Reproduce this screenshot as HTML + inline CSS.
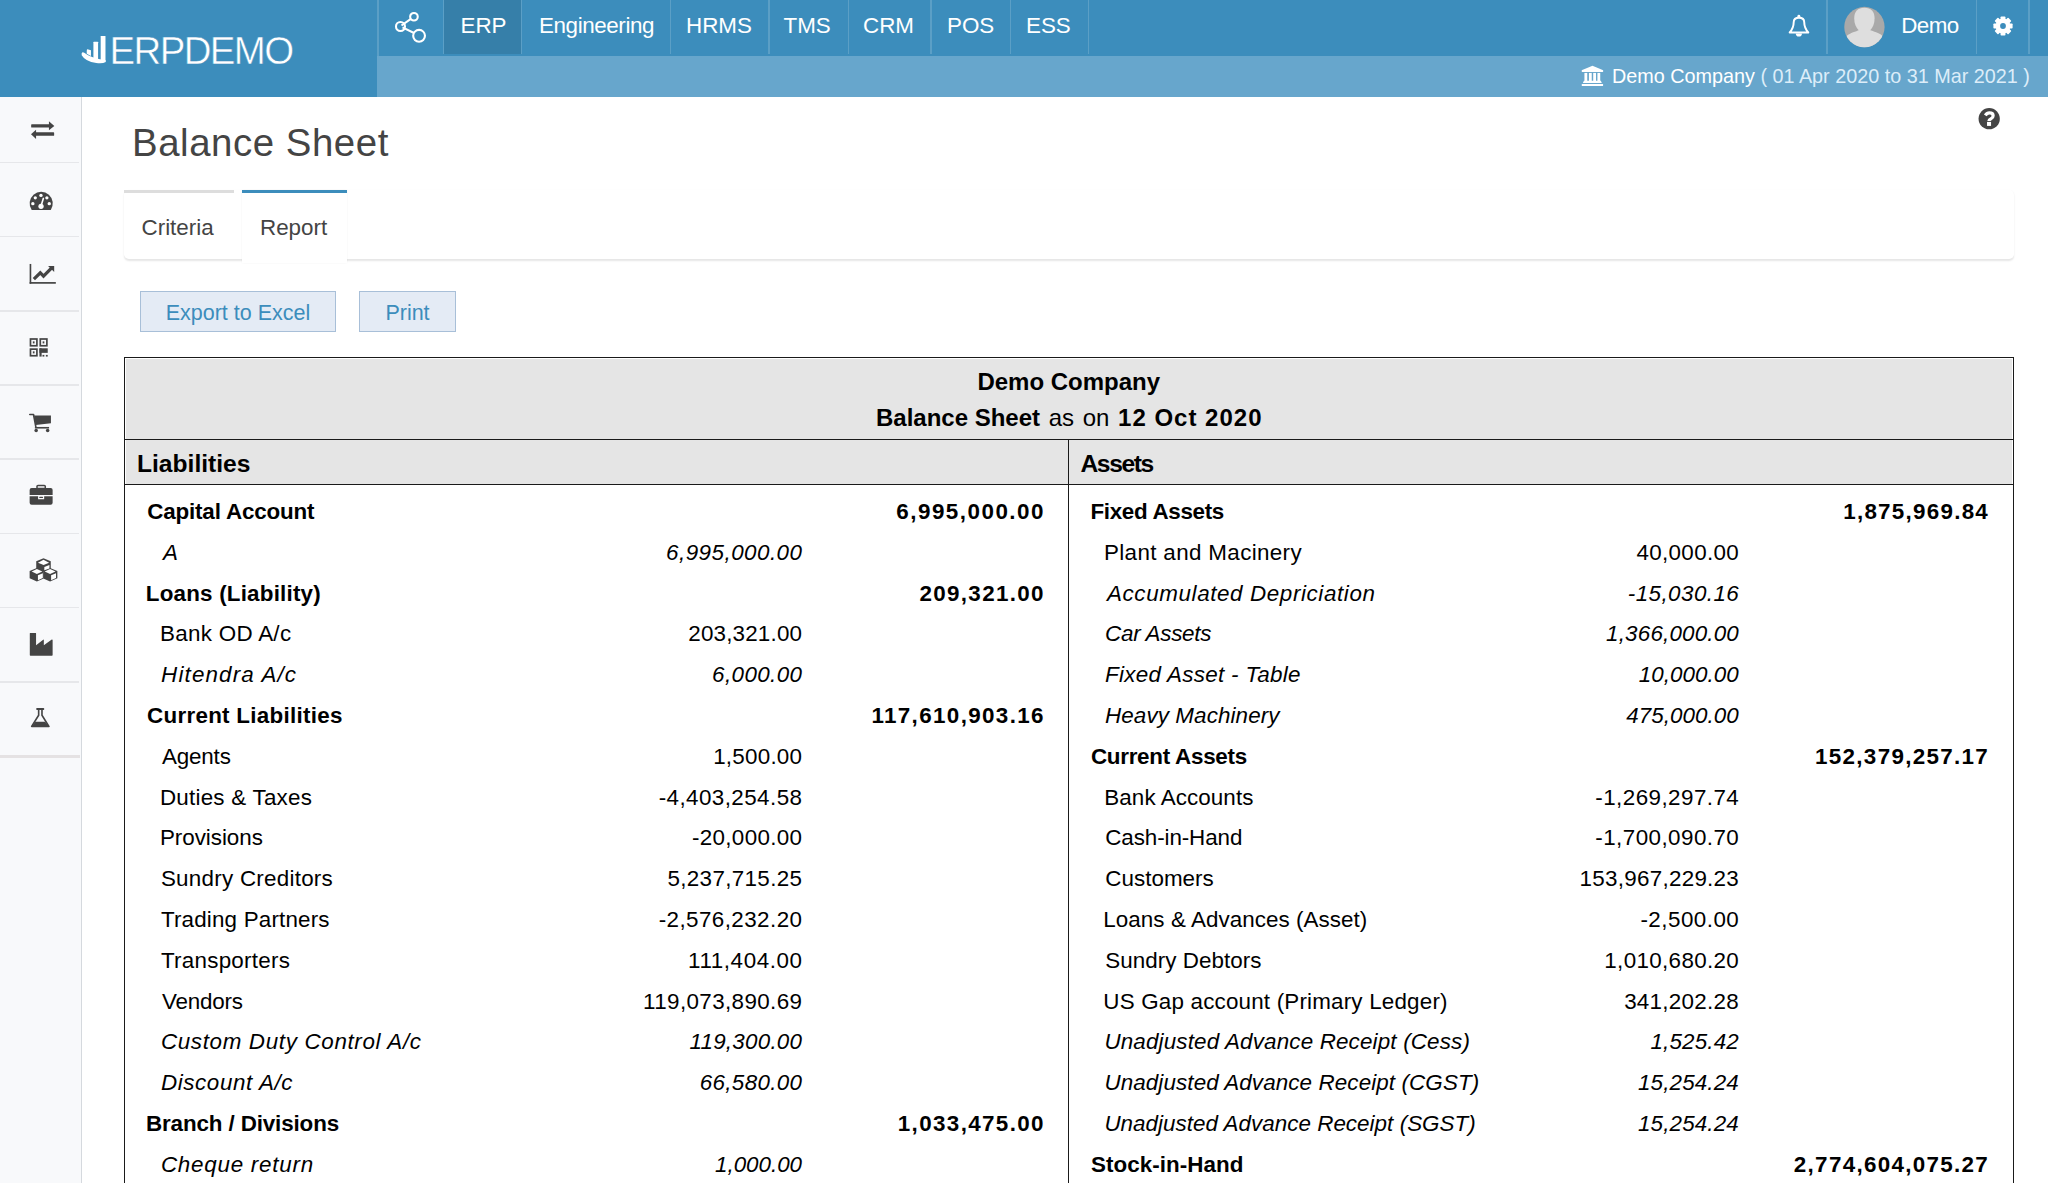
<!DOCTYPE html>
<html>
<head>
<meta charset="utf-8">
<style>
*{box-sizing:border-box;margin:0;padding:0}
html,body{width:2048px;height:1183px;overflow:hidden;background:#fff;font-family:"Liberation Sans",sans-serif;position:relative}
.abs{position:absolute}
#logo{left:0;top:0;width:377px;height:97px;background:#3c8dbc}
#topnav{left:377px;top:0;width:1671px;height:56px;background:#3c8dbc}
#subbar{left:377px;top:55.5px;width:1671px;height:41.5px;background:#67a6cc}
.sep{position:absolute;top:0;width:1.6px;height:54px;background:rgba(255,255,255,0.16)}
.nt{position:absolute;top:0;height:54px;line-height:52px;font-size:22.4px;color:#fff;white-space:nowrap}
#sidebar{left:0;top:97px;width:82.4px;height:1086px;background:#f8f9fb;border-right:1.6px solid #d5d9de}
.sbsep{position:absolute;left:0;width:79px;height:1.6px;background:#e6e7ea}
.ico{position:absolute}
.btn{background:#e4ebf5;border:1.6px solid #a8bfd8;color:#3c8dbc;font-size:21.5px;line-height:42px;text-align:center;white-space:nowrap}
.hl{height:1.6px;background:#1a1a1a}
.tt{font-size:24px;line-height:35.6px;color:#000;white-space:nowrap}
.th{font-size:24.6px;line-height:36px;color:#000;white-space:nowrap}
.r{position:absolute;font-size:22.4px;line-height:40.8px;height:40.8px;color:#000;white-space:nowrap}
.it{font-style:italic}
.b{font-weight:bold}
.nm.b{letter-spacing:-0.25px}
.nm.it{letter-spacing:0.55px}
.num{letter-spacing:0.1px;margin-right:-0.1px}
.num.it{letter-spacing:0.35px;margin-right:-0.35px}
.num.b{letter-spacing:1.3px;margin-right:-1.3px}
</style>
</head>
<body>
<!-- logo -->
<div id="logo" class="abs">
  <svg class="ico" style="left:76px;top:30px" width="40" height="40" viewBox="0 0 1183 1183"><g fill="#fff">
    <rect x="730" y="180" width="142" height="745" rx="12"/>
    <rect x="515" y="350" width="138" height="520" rx="12"/>
    <path d="M318 610 Q318 560 365 575 L442 598 L442 770 L318 705 Z"/>
    <path d="M168 690 Q190 635 245 675 Q430 835 880 895 L880 945 Q790 1005 600 978 Q270 925 168 745 Z"/>
  </g></svg>
  <div class="abs" style="left:109.5px;top:28px;font-size:38.4px;line-height:46px;color:#fff;letter-spacing:-1.6px;-webkit-text-stroke:0.5px #3c8dbc;white-space:nowrap">ERPDEMO</div>
</div>
<!-- top nav -->
<div id="topnav" class="abs">
  <div class="sep" style="left:0;height:56px"></div>
  <svg class="ico" style="left:16px;top:10px" width="36" height="36" viewBox="0 0 36 36">
    <g fill="none" stroke="#fff" stroke-width="2.1">
      <circle cx="20.95" cy="6.74" r="3.8"/>
      <circle cx="7.47" cy="16.5" r="4.5"/>
      <circle cx="26.07" cy="25.8" r="5.9"/>
      <path d="M8.5 15.5 L18.2 8.6 M9.5 17.4 L21 23"/>
    </g>
  </svg>
  <div class="sep" style="left:65.5px"></div>
  <div class="abs" style="left:67px;top:0;width:77px;height:53.5px;background:#367fa9"></div>
  <div class="nt" style="left:83.5px">ERP</div>
  <div class="sep" style="left:143.5px"></div>
  <div class="nt" style="left:162px;letter-spacing:-0.4px">Engineering</div>
  <div class="sep" style="left:292.5px"></div>
  <div class="nt" style="left:309px">HRMS</div>
  <div class="sep" style="left:391px"></div>
  <div class="nt" style="left:406.5px">TMS</div>
  <div class="sep" style="left:470.5px"></div>
  <div class="nt" style="left:486px">CRM</div>
  <div class="sep" style="left:553px"></div>
  <div class="nt" style="left:570px">POS</div>
  <div class="sep" style="left:632.5px"></div>
  <div class="nt" style="left:649px">ESS</div>
  <div class="sep" style="left:710.5px"></div>

  <!-- right -->
  <svg class="ico" style="left:1403px;top:8px" width="40" height="36" viewBox="0 0 1314 1183">
    <path d="M318 805 C420 690 450 610 450 470 C450 380 520 322 622 322 C724 322 796 380 796 470 C796 610 826 690 930 805 Z" fill="none" stroke="#fff" stroke-width="64" stroke-linejoin="round"/>
    <circle cx="620" cy="268" r="48" fill="#fff"/>
    <path d="M518 835 A102 102 0 0 0 722 835 Z" fill="#fff"/>
  </svg>
  <div class="sep" style="left:1449px"></div>
  <svg class="ico" style="left:1463px;top:3px" width="50" height="48" viewBox="0 0 1232 1183">
    <defs><clipPath id="av"><circle cx="602" cy="592" r="497"/></clipPath></defs>
    <circle cx="602" cy="592" r="497" fill="#a9a9a9"/>
    <g clip-path="url(#av)" fill="#dedede">
      <path d="M600 120 C765 120 852 205 852 385 C852 520 805 615 738 678 L468 678 C398 615 350 520 350 385 C350 205 438 120 600 120 Z"/>
      <path d="M165 815 C250 738 400 705 470 668 L735 668 C820 705 965 738 1040 805 L1040 1183 L165 1183 Z"/>
    </g>
  </svg>
  <div class="nt" style="left:1524.3px;letter-spacing:-0.6px">Demo</div>
  <div class="sep" style="left:1598.5px"></div>
  <svg class="ico" style="left:1613.5px;top:13.65px" width="24" height="24" viewBox="0 0 24 24"><circle cx="12" cy="12" r="7.4" fill="#fff"/><rect x="9.55" y="2.4000000000000004" width="4.9" height="9.6" rx="0.8" fill="#fff" transform="rotate(0 12 12)"/><rect x="9.55" y="2.4000000000000004" width="4.9" height="9.6" rx="0.8" fill="#fff" transform="rotate(45 12 12)"/><rect x="9.55" y="2.4000000000000004" width="4.9" height="9.6" rx="0.8" fill="#fff" transform="rotate(90 12 12)"/><rect x="9.55" y="2.4000000000000004" width="4.9" height="9.6" rx="0.8" fill="#fff" transform="rotate(135 12 12)"/><rect x="9.55" y="2.4000000000000004" width="4.9" height="9.6" rx="0.8" fill="#fff" transform="rotate(180 12 12)"/><rect x="9.55" y="2.4000000000000004" width="4.9" height="9.6" rx="0.8" fill="#fff" transform="rotate(225 12 12)"/><rect x="9.55" y="2.4000000000000004" width="4.9" height="9.6" rx="0.8" fill="#fff" transform="rotate(270 12 12)"/><rect x="9.55" y="2.4000000000000004" width="4.9" height="9.6" rx="0.8" fill="#fff" transform="rotate(315 12 12)"/><circle cx="12" cy="12" r="2.9" fill="#3c8dbc"/></svg>
  <div class="sep" style="left:1651px"></div>
</div>
<div id="subbar" class="abs">
  <svg class="ico" style="left:1199px;top:4.5px" width="36" height="32" viewBox="0 0 1331 1183"><g fill="#fff">
    <path d="M610 212 L985 370 Q1005 380 1005 400 L1005 420 Q1005 442 985 442 L230 442 Q210 442 210 420 L210 400 Q210 380 230 370 Z"/>
    <rect x="312" y="478" width="104" height="300"/><rect x="478" y="478" width="104" height="300"/>
    <rect x="636" y="478" width="104" height="300"/><rect x="792" y="478" width="104" height="300"/>
    <polygon points="292,765 918,765 955,848 255,848"/>
    <rect x="212" y="885" width="790" height="72" rx="10"/>
  </g></svg>
  <div class="abs" style="left:1235px;top:0.4px;height:41px;line-height:41px;font-size:19.8px;color:#fff;white-space:nowrap">Demo Company <span style="color:#dcedf9">( 01 Apr 2020 to 31 Mar 2021 )</span></div>
</div>

<!-- sidebar -->
<div id="sidebar" class="abs">
  <div class="sbsep" style="top:64.6px"></div>
  <div class="sbsep" style="top:138.8px"></div>
  <div class="sbsep" style="top:213px"></div>
  <div class="sbsep" style="top:287.2px"></div>
  <div class="sbsep" style="top:361.4px"></div>
  <div class="sbsep" style="top:435.6px"></div>
  <div class="sbsep" style="top:509.8px"></div>
  <div class="sbsep" style="top:584px"></div>
  <div class="sbsep" style="top:658.2px;height:2.6px;width:80px;background:#e5e2e3"></div>
</div>
<!-- sidebar icons (coords in 45x40 boxes, viewBox = zoomed px) -->
<svg class="ico" style="left:20px;top:110px" width="45" height="40" viewBox="0 0 1331 1183"><g fill="#444">
  <rect x="330" y="420" width="560" height="100" rx="20"/><polygon points="855,330 1015,470 855,600"/>
  <rect x="440" y="660" width="570" height="105" rx="20"/><polygon points="475,585 325,715 475,855"/>
</g></svg>
<svg class="ico" style="left:20px;top:180px" width="45" height="40" viewBox="0 0 1331 1183">
  <path fill="#444" d="M345 885 A342 342 0 1 1 909 885 Z"/>
  <g fill="#fff"><circle cx="620" cy="455" r="50"/><circle cx="452" cy="528" r="48"/><circle cx="795" cy="528" r="48"/><circle cx="380" cy="700" r="50"/><circle cx="865" cy="700" r="50"/><circle cx="622" cy="780" r="78"/></g>
  <path d="M622 770 L690 545" stroke="#fff" stroke-width="48" stroke-linecap="round"/>
</svg>
<svg class="ico" style="left:20px;top:255px" width="45" height="40" viewBox="0 0 1331 1183"><g fill="#444">
  <rect x="285" y="265" width="48" height="585"/><rect x="285" y="800" width="775" height="50"/>
  <polyline points="410,715 600,525 695,625 945,375" fill="none" stroke="#444" stroke-width="95" stroke-linejoin="miter"/>
  <polygon points="830,322 1012,322 1012,505"/>
</g></svg>
<svg class="ico" style="left:20px;top:327px" width="45" height="40" viewBox="0 0 1331 1183"><g fill="none" stroke="#444" stroke-width="50">
  <rect x="310" y="355" width="190" height="200"/><rect x="600" y="355" width="195" height="200"/><rect x="310" y="655" width="190" height="195"/>
</g><g fill="#444">
  <rect x="380" y="425" width="50" height="60"/><rect x="670" y="425" width="50" height="60"/><rect x="380" y="720" width="50" height="60"/>
  <rect x="575" y="630" width="65" height="245"/><rect x="575" y="630" width="245" height="135"/>
  <rect x="665" y="825" width="55" height="50"/><rect x="765" y="825" width="55" height="50"/>
</g></svg>
<svg class="ico" style="left:20px;top:402px" width="45" height="40" viewBox="0 0 1331 1183"><g fill="#444">
  <path d="M290 370 L400 370 L470 745" fill="none" stroke="#444" stroke-width="48" stroke-linecap="round" stroke-linejoin="round"/>
  <polygon points="415,398 915,398 915,625 462,680"/>
  <rect x="440" y="738" width="420" height="48"/>
  <circle cx="478" cy="845" r="52"/><circle cx="818" cy="845" r="52"/>
</g></svg>
<svg class="ico" style="left:20px;top:475px" width="45" height="40" viewBox="0 0 1331 1183"><g fill="#444">
  <rect x="502" y="312" width="246" height="90" rx="30" fill="none" stroke="#444" stroke-width="45"/>
  <path d="M345 385 L905 385 Q965 385 965 445 L965 588 L285 588 L285 445 Q285 385 345 385 Z"/>
  <path d="M285 630 L535 630 L535 720 L715 720 L715 630 L965 630 L965 820 Q965 880 905 880 L345 880 Q285 880 285 820 Z"/>
  <rect x="570" y="640" width="110" height="40" rx="15"/>
</g></svg>
<svg class="ico" style="left:20px;top:550px" width="45" height="40" viewBox="0 0 1331 1183">
  <g fill="#444">
    <polygon points="695,245 910,335 910,560 695,640 480,560 480,335"/>
    <polygon points="495,535 700,620 700,840 500,935 285,835 285,620"/>
    <polygon points="890,535 1105,620 1105,835 890,935 690,840 690,620"/>
  </g>
  <g fill="#fff">
    <polygon points="695,290 860,375 700,445 530,375"/>
    <polygon points="720,500 870,440 870,545 720,600"/>
    <polygon points="500,560 660,635 500,710 345,635"/>
    <polygon points="530,750 675,690 675,825 530,895"/>
    <polygon points="890,560 1050,635 890,710 730,635"/>
    <polygon points="920,750 1065,690 1065,825 920,895"/>
  </g>
</svg>
<svg class="ico" style="left:20px;top:624px" width="45" height="40" viewBox="0 0 1331 1183">
  <path fill="#444" d="M300 265 L465 265 Q475 265 475 275 L475 625 L695 460 Q705 455 705 470 L705 625 L940 460 Q965 450 965 480 L965 920 Q965 940 945 940 L310 940 Q290 940 290 920 L290 275 Q290 265 300 265 Z"/>
</svg>
<svg class="ico" style="left:20px;top:698px" width="45" height="40" viewBox="0 0 1331 1183">
  <rect x="478" y="298" width="240" height="55" rx="25" fill="#444"/>
  <path d="M552 345 L552 510 L345 840 L855 840 L650 510 L650 345" fill="none" stroke="#444" stroke-width="48" stroke-linejoin="round"/>
  <polygon fill="#444" points="455,700 745,700 870,860 330,860"/>
</svg>



<!-- content -->
<div class="abs" style="left:132px;top:117px;font-size:38.4px;line-height:52px;color:#444;letter-spacing:0.55px;white-space:nowrap">Balance Sheet</div>
<svg class="ico" style="left:1972px;top:102px" width="34" height="34" viewBox="0 0 1183 1183">
  <circle cx="598" cy="580" r="370" fill="#444"/>
  <path d="M462 462 Q520 375 605 375 Q735 375 735 475 Q735 545 655 590 Q590 625 590 665" fill="none" stroke="#fff" stroke-width="112" stroke-linejoin="round"/>
  <rect x="523" y="692" width="140" height="140" fill="#fff"/>
</svg>
<!-- tabs box -->
<div class="abs" style="left:124px;top:189.5px;width:1889.5px;height:69.5px;background:#fff;border-radius:4.8px;box-shadow:0 1.8px 1.8px rgba(0,0,0,0.1)"></div>
<div class="abs" style="left:124px;top:189.5px;width:109.5px;height:3.2px;background:#ddd"></div>
<div class="abs" style="left:124px;top:194px;width:118px;height:70px;line-height:67px;font-size:22.4px;color:#444;padding-left:17.5px;white-space:nowrap">Criteria</div>
<div class="abs" style="left:242px;top:189.5px;width:104.7px;height:73px;background:#fff;border-top:3.2px solid #3c8dbc;box-shadow:0 0 2px rgba(0,0,0,0.05)"></div>
<div class="abs" style="left:260px;top:194px;height:70px;line-height:67px;font-size:22.4px;color:#444;white-space:nowrap">Report</div>
<!-- buttons -->
<div class="btn abs" style="left:140px;top:291.3px;width:196px;height:40.8px">Export to Excel</div>
<div class="btn abs" style="left:359px;top:291.3px;width:97px;height:40.8px">Print</div>
<!-- report table -->
<div class="abs" style="left:124px;top:357px;width:1889.5px;height:900px;border:1.6px solid #1a1a1a;border-bottom:none"></div>
<div class="abs" style="left:125.6px;top:358.6px;width:1886.3px;height:80.2px;background:#e5e5e5"></div>
<div class="abs hl" style="left:124px;top:438.7px;width:1889.5px"></div>
<div class="abs" style="left:125.6px;top:440.3px;width:1886.3px;height:43.5px;background:#e5e5e5"></div>
<div class="abs hl" style="left:124px;top:483.8px;width:1889.5px"></div>
<div class="abs" style="left:1067.8px;top:440px;width:1.4px;height:760px;background:#1a1a1a"></div>
<div class="abs tt b" style="left:124px;width:1889.5px;top:364px;text-align:center">Demo Company</div>
<div class="abs tt" style="left:124px;width:1889.5px;top:399.6px;text-align:center"><b>Balance Sheet</b><span style="word-spacing:2px"> as on </span><b style="letter-spacing:1px">12 Oct 202<span style="letter-spacing:0">0</span></b></div>
<div class="abs th b" style="left:137px;top:446px">Liabilities</div>
<div class="abs th b" style="left:1080.5px;top:446px;letter-spacing:-1.4px">Assets</div>
<!--ROWS-->
<div class="r b nm" style="top:492.00px;left:147.3px;letter-spacing:-0.18px">Capital Account</div>
<div class="r b num" style="top:492.00px;right:1004.5px;letter-spacing:1.5px;margin-right:-1.5px">6,995,000.00</div>
<div class="r it nm" style="top:532.80px;left:163.0px;letter-spacing:0px">A</div>
<div class="r it num" style="top:532.80px;right:1246.0px;letter-spacing:0.47px;margin-right:-0.47px">6,995,000.00</div>
<div class="r b nm" style="top:573.60px;left:145.8px;letter-spacing:0.2px">Loans (Liability)</div>
<div class="r b num" style="top:573.60px;right:1004.5px;letter-spacing:1.33px;margin-right:-1.33px">209,321.00</div>
<div class="r nm" style="top:614.40px;left:160.1px;letter-spacing:0.28px">Bank OD A/c</div>
<div class="r num" style="top:614.40px;right:1246.0px;letter-spacing:0.18px;margin-right:-0.18px">203,321.00</div>
<div class="r it nm" style="top:655.20px;left:161.1px;letter-spacing:1.14px">Hitendra A/c</div>
<div class="r it num" style="top:655.20px;right:1246.0px;letter-spacing:0.39px;margin-right:-0.39px">6,000.00</div>
<div class="r b nm" style="top:696.00px;left:147.0px;letter-spacing:0.28px">Current Liabilities</div>
<div class="r b num" style="top:696.00px;right:1004.5px;letter-spacing:1.36px;margin-right:-1.36px">117,610,903.16</div>
<div class="r nm" style="top:736.80px;left:161.9px;letter-spacing:-0.14px">Agents</div>
<div class="r num" style="top:736.80px;right:1246.0px;letter-spacing:0.24px;margin-right:-0.24px">1,500.00</div>
<div class="r nm" style="top:777.60px;left:159.9px;letter-spacing:0.24px">Duties &amp; Taxes</div>
<div class="r num" style="top:777.60px;right:1246.0px;letter-spacing:0.43px;margin-right:-0.43px">-4,403,254.58</div>
<div class="r nm" style="top:818.40px;left:159.9px;letter-spacing:-0.03px">Provisions</div>
<div class="r num" style="top:818.40px;right:1246.0px;letter-spacing:0.33px;margin-right:-0.33px">-20,000.00</div>
<div class="r nm" style="top:859.20px;left:160.9px;letter-spacing:0.26px">Sundry Creditors</div>
<div class="r num" style="top:859.20px;right:1246.0px;letter-spacing:0.35px;margin-right:-0.35px">5,237,715.25</div>
<div class="r nm" style="top:900.00px;left:160.9px;letter-spacing:0.18px">Trading Partners</div>
<div class="r num" style="top:900.00px;right:1246.0px;letter-spacing:0.43px;margin-right:-0.43px">-2,576,232.20</div>
<div class="r nm" style="top:940.80px;left:160.9px;letter-spacing:0.27px">Transporters</div>
<div class="r num" style="top:940.80px;right:1246.0px;letter-spacing:0.58px;margin-right:-0.58px">111,404.00</div>
<div class="r nm" style="top:981.60px;left:161.9px;letter-spacing:-0.18px">Vendors</div>
<div class="r num" style="top:981.60px;right:1246.0px;letter-spacing:0.38px;margin-right:-0.38px">119,073,890.69</div>
<div class="r it nm" style="top:1022.40px;left:160.9px;letter-spacing:0.66px">Custom Duty Control A/c</div>
<div class="r it num" style="top:1022.40px;right:1246.0px;letter-spacing:0.24px;margin-right:-0.24px">119,300.00</div>
<div class="r it nm" style="top:1063.20px;left:160.9px;letter-spacing:0.61px">Discount A/c</div>
<div class="r it num" style="top:1063.20px;right:1246.0px;letter-spacing:0.33px;margin-right:-0.33px">66,580.00</div>
<div class="r b nm" style="top:1104.00px;left:146.0px;letter-spacing:-0.13px">Branch / Divisions</div>
<div class="r b num" style="top:1104.00px;right:1004.5px;letter-spacing:1.36px;margin-right:-1.36px">1,033,475.00</div>
<div class="r it nm" style="top:1144.80px;left:160.9px;letter-spacing:0.76px">Cheque return</div>
<div class="r it num" style="top:1144.80px;right:1246.0px;letter-spacing:-0.03px;margin-right:0.03px">1,000.00</div>
<div class="r b nm" style="top:492.00px;left:1090.4px;letter-spacing:-0.31px">Fixed Assets</div>
<div class="r b num" style="top:492.00px;right:60.2px;letter-spacing:1.26px;margin-right:-1.26px">1,875,969.84</div>
<div class="r nm" style="top:532.80px;left:1104.0px;letter-spacing:0.35px">Plant and Macinery</div>
<div class="r num" style="top:532.80px;right:309.2px;letter-spacing:0.35px;margin-right:-0.35px">40,000.00</div>
<div class="r it nm" style="top:573.60px;left:1107.0px;letter-spacing:0.61px">Accumulated Depriciation</div>
<div class="r it num" style="top:573.60px;right:309.2px;letter-spacing:0.44px;margin-right:-0.44px">-15,030.16</div>
<div class="r it nm" style="top:614.40px;left:1105.0px;letter-spacing:-0.24px">Car Assets</div>
<div class="r it num" style="top:614.40px;right:309.2px;letter-spacing:0.18px;margin-right:-0.18px">1,366,000.00</div>
<div class="r it nm" style="top:655.20px;left:1105.0px;letter-spacing:0.31px">Fixed Asset - Table</div>
<div class="r it num" style="top:655.20px;right:309.2px;letter-spacing:0.04px;margin-right:-0.04px">10,000.00</div>
<div class="r it nm" style="top:696.00px;left:1105.0px;letter-spacing:0.11px">Heavy Machinery</div>
<div class="r it num" style="top:696.00px;right:309.2px;letter-spacing:0.06px;margin-right:-0.06px">475,000.00</div>
<div class="r b nm" style="top:736.80px;left:1090.9px;letter-spacing:-0.26px">Current Assets</div>
<div class="r b num" style="top:736.80px;right:60.2px;letter-spacing:1.32px;margin-right:-1.32px">152,379,257.17</div>
<div class="r nm" style="top:777.60px;left:1104.3px;letter-spacing:0.08px">Bank Accounts</div>
<div class="r num" style="top:777.60px;right:309.2px;letter-spacing:0.44px;margin-right:-0.44px">-1,269,297.74</div>
<div class="r nm" style="top:818.40px;left:1105.3px;letter-spacing:-0.1px">Cash-in-Hand</div>
<div class="r num" style="top:818.40px;right:309.2px;letter-spacing:0.44px;margin-right:-0.44px">-1,700,090.70</div>
<div class="r nm" style="top:859.20px;left:1105.3px;letter-spacing:0.03px">Customers</div>
<div class="r num" style="top:859.20px;right:309.2px;letter-spacing:0.28px;margin-right:-0.28px">153,967,229.23</div>
<div class="r nm" style="top:900.00px;left:1103.3px;letter-spacing:0.06px">Loans &amp; Advances (Asset)</div>
<div class="r num" style="top:900.00px;right:309.2px;letter-spacing:0.47px;margin-right:-0.47px">-2,500.00</div>
<div class="r nm" style="top:940.80px;left:1105.3px;letter-spacing:0.04px">Sundry Debtors</div>
<div class="r num" style="top:940.80px;right:309.2px;letter-spacing:0.34px;margin-right:-0.34px">1,010,680.20</div>
<div class="r nm" style="top:981.60px;left:1103.3px;letter-spacing:0.19px">US Gap account (Primary Ledger)</div>
<div class="r num" style="top:981.60px;right:309.2px;letter-spacing:0.29px;margin-right:-0.29px">341,202.28</div>
<div class="r it nm" style="top:1022.40px;left:1104.4px;letter-spacing:0.17px">Unadjusted Advance Receipt (Cess)</div>
<div class="r it num" style="top:1022.40px;right:309.2px;letter-spacing:0.17px;margin-right:-0.17px">1,525.42</div>
<div class="r it nm" style="top:1063.20px;left:1104.4px;letter-spacing:0.11px">Unadjusted Advance Receipt (CGST)</div>
<div class="r it num" style="top:1063.20px;right:309.2px;letter-spacing:0.15px;margin-right:-0.15px">15,254.24</div>
<div class="r it nm" style="top:1104.00px;left:1104.4px;letter-spacing:0.04px">Unadjusted Advance Receipt (SGST)</div>
<div class="r it num" style="top:1104.00px;right:309.2px;letter-spacing:0.15px;margin-right:-0.15px">15,254.24</div>
<div class="r b nm" style="top:1144.80px;left:1091.0px;letter-spacing:0.06px">Stock-in-Hand</div>
<div class="r b num" style="top:1144.80px;right:60.2px;letter-spacing:1.31px;margin-right:-1.31px">2,774,604,075.27</div>
<!--/ROWS-->
</body>
</html>
